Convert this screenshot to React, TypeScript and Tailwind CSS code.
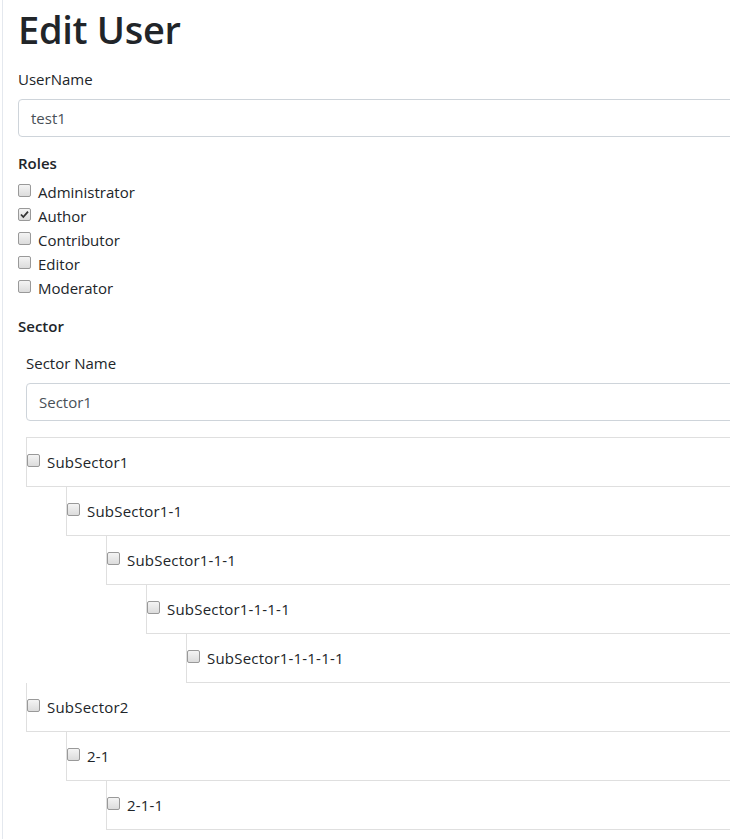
import React from 'react'

type Node = { name: string; children?: Node[] }

const sectors: Node[] = [
  {
    name: 'SubSector1',
    children: [
      {
        name: 'SubSector1-1',
        children: [
          {
            name: 'SubSector1-1-1',
            children: [{ name: 'SubSector1-1-1-1', children: [{ name: 'SubSector1-1-1-1-1' }] }],
          },
        ],
      },
    ],
  },
  { name: 'SubSector2', children: [{ name: '2-1', children: [{ name: '2-1-1' }] }] },
]

const roles = ['Administrator', 'Author', 'Contributor', 'Editor', 'Moderator']

function Box({ checked }: { checked?: boolean }) {
  return (
    <span className="relative inline-block w-[13px] h-[13px] shrink-0 rounded-[2px] border border-[#999] bg-gradient-to-b from-[#f4f4f4] to-[#dcdcdc]">
      {checked && (
        <svg viewBox="0 0 13 13" className="absolute -left-px -top-px w-[13px] h-[13px]">
          <path d="M3 6.5 L5.3 9 L10 3.6" fill="none" stroke="#333" strokeWidth="1.8" />
        </svg>
      )}
    </span>
  )
}

function Tree({ items, first }: { items: Node[]; first?: boolean }) {
  return (
    <ul>
      {items.map((n, i) => (
        <li key={n.name}>
          <div
            className={`flex items-center h-[49px] border-l border-b border-[#dfdfdf] ${first && i === 0 ? 'border-t h-[50px]' : ''}`}
          >
            <span className="pb-[2px]">
              <Box />
            </span>
            <span className="ml-[7px] tracking-[0.2px]">{n.name}</span>
          </div>
          {n.children && (
            <div className="ml-10">
              <Tree items={n.children} />
            </div>
          )}
        </li>
      ))}
    </ul>
  )
}

export default function App() {
  return (
    <div
      className="w-full h-[839px] overflow-hidden bg-white text-[#212529] text-[15px] leading-6 pl-[2px]"
      style={{ fontFamily: '"Open Sans", "Noto Sans", sans-serif' }}
    >
      <div className="w-[900px] h-full border-l border-[#e4e8ee] pl-[15px]">
        <h1 className="pt-[5px] text-[38px] leading-[48px] font-semibold tracking-[-0.3px] mb-[14px]">Edit User</h1>
        <label className="block mb-2">UserName</label>
        <div className="h-[38px] rounded border border-[#ced4da] px-3 flex items-center text-[#495057]">test1</div>

        <div className="mt-[14px] mb-[5px] font-semibold">Roles</div>
        <div>
          {roles.map((r) => (
            <div key={r} className="flex items-center h-6">
              <span className="pb-[2px]">
                <Box checked={r === 'Author'} />
              </span>
              <span className="ml-[7px]">{r}</span>
            </div>
          ))}
        </div>

        <div className="mt-[14px] font-semibold">Sector</div>
        <div className="pl-2 pt-[13px]">
          <label className="block mb-2">Sector Name</label>
          <div className="h-[38px] rounded border border-[#ced4da] px-3 flex items-center text-[#495057]">Sector1</div>
          <div className="mt-4">
            <Tree items={sectors} first />
          </div>
        </div>
      </div>
    </div>
  )
}
